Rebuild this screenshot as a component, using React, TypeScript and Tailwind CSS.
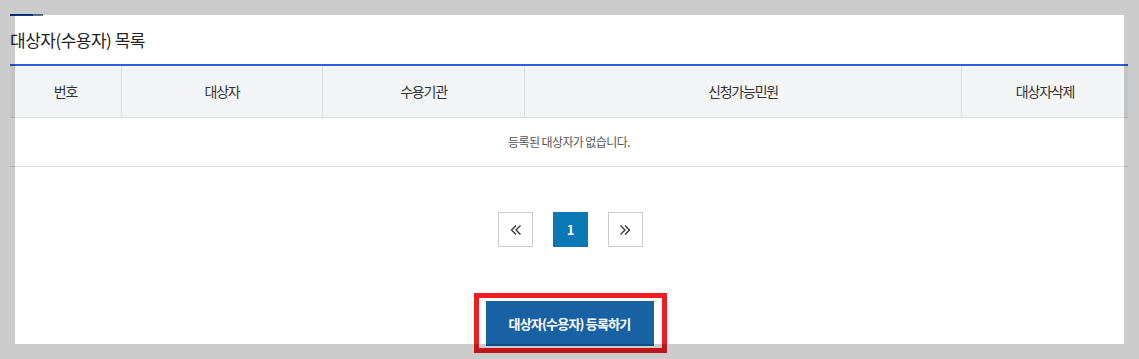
import React from 'react';

const columns = [
  { label: '번호', width: 'w-[112px]' },
  { label: '대상자', width: 'w-[201px]' },
  { label: '수용기관', width: 'w-[202px]' },
  { label: '신청가능민원', width: 'w-[437px]' },
  { label: '대상자삭제', width: 'flex-1' },
];

function DoubleChevron({ dir }: { dir: 'left' | 'right' }) {
  const d =
    dir === 'left'
      ? 'M6 0.5 L1.5 5 L6 9.5 M10.5 0.5 L6 5 L10.5 9.5'
      : 'M0.5 0.5 L5 5 L0.5 9.5 M5 0.5 L9.5 5 L5 9.5';
  return (
    <svg width="11" height="10" viewBox="0 0 11 10" fill="none" stroke="#333" strokeWidth="1.3">
      <path d={d} />
    </svg>
  );
}

export default function App() {
  return (
    <div
      className="relative w-[1139px] h-[359px] overflow-hidden bg-white text-[#333]"
      style={{ fontFamily: '"Noto Sans CJK KR", "Noto Sans", sans-serif' }}
    >
      <div className="pl-[10px] pr-[11px] pt-[14px]">
        {/* tab indicator */}
        <div className="flex h-[2px]">
          <div className="w-[23px] bg-[#13348a]" />
          <div className="w-[10px] bg-[#5d7791]" />
        </div>

        {/* title */}
        <h2 className="h-[48px] pt-[11px] text-[17px] leading-[26px] tracking-[-0.5px] text-[#222] font-normal">
          대상자(수용자) 목록
        </h2>

        {/* table */}
        <div className="border-t-2 border-[#2c5fd6]">
          <div className="flex h-[52px] bg-[#f3f4f6] border-b border-[#dddddd]">
            {columns.map((col, i) => (
              <div
                key={col.label}
                className={`${col.width} flex items-center justify-center text-[14px] tracking-[-1.2px] text-[#333] ${
                  i < columns.length - 1 ? 'border-r border-[#dddddd]' : ''
                }`}
              >
                {col.label}
              </div>
            ))}
          </div>
          <div className="flex h-[49px] items-center justify-center border-b border-[#dddddd] text-[12px] tracking-[-0.6px] text-[#555]">
            등록된 대상자가 없습니다.
          </div>
        </div>

        {/* pagination */}
        <div className="mt-[45px] flex justify-center gap-[20px] pl-[3px]">
          <button className="w-[35px] h-[35px] border border-[#cccccc] bg-white flex items-center justify-center">
            <DoubleChevron dir="left" />
          </button>
          <button className="w-[35px] h-[35px] bg-[#0a78b5] flex items-center justify-center text-[13px] font-bold text-white">
            1
          </button>
          <button className="w-[35px] h-[35px] border border-[#cccccc] bg-white flex items-center justify-center">
            <DoubleChevron dir="right" />
          </button>
        </div>

        {/* register button */}
        <div className="mt-[54px] flex justify-center">
          <button className="w-[168px] h-[45px] bg-[#1862a3] text-white text-[13px] font-semibold tracking-[-0.8px] ml-[1px]">
            대상자(수용자) 등록하기
          </button>
        </div>
      </div>

      {/* annotation box */}
      <div className="absolute left-[474px] top-[293px] w-[193px] h-[60px] border-[5px] border-[#ee1c25] pointer-events-none" />

      {/* spotlight overlay */}
      <div className="absolute left-[15px] top-[15px] w-[1109px] h-[329px] shadow-[0_0_0_2000px_rgba(0,0,0,0.2)] pointer-events-none" />
    </div>
  );
}
